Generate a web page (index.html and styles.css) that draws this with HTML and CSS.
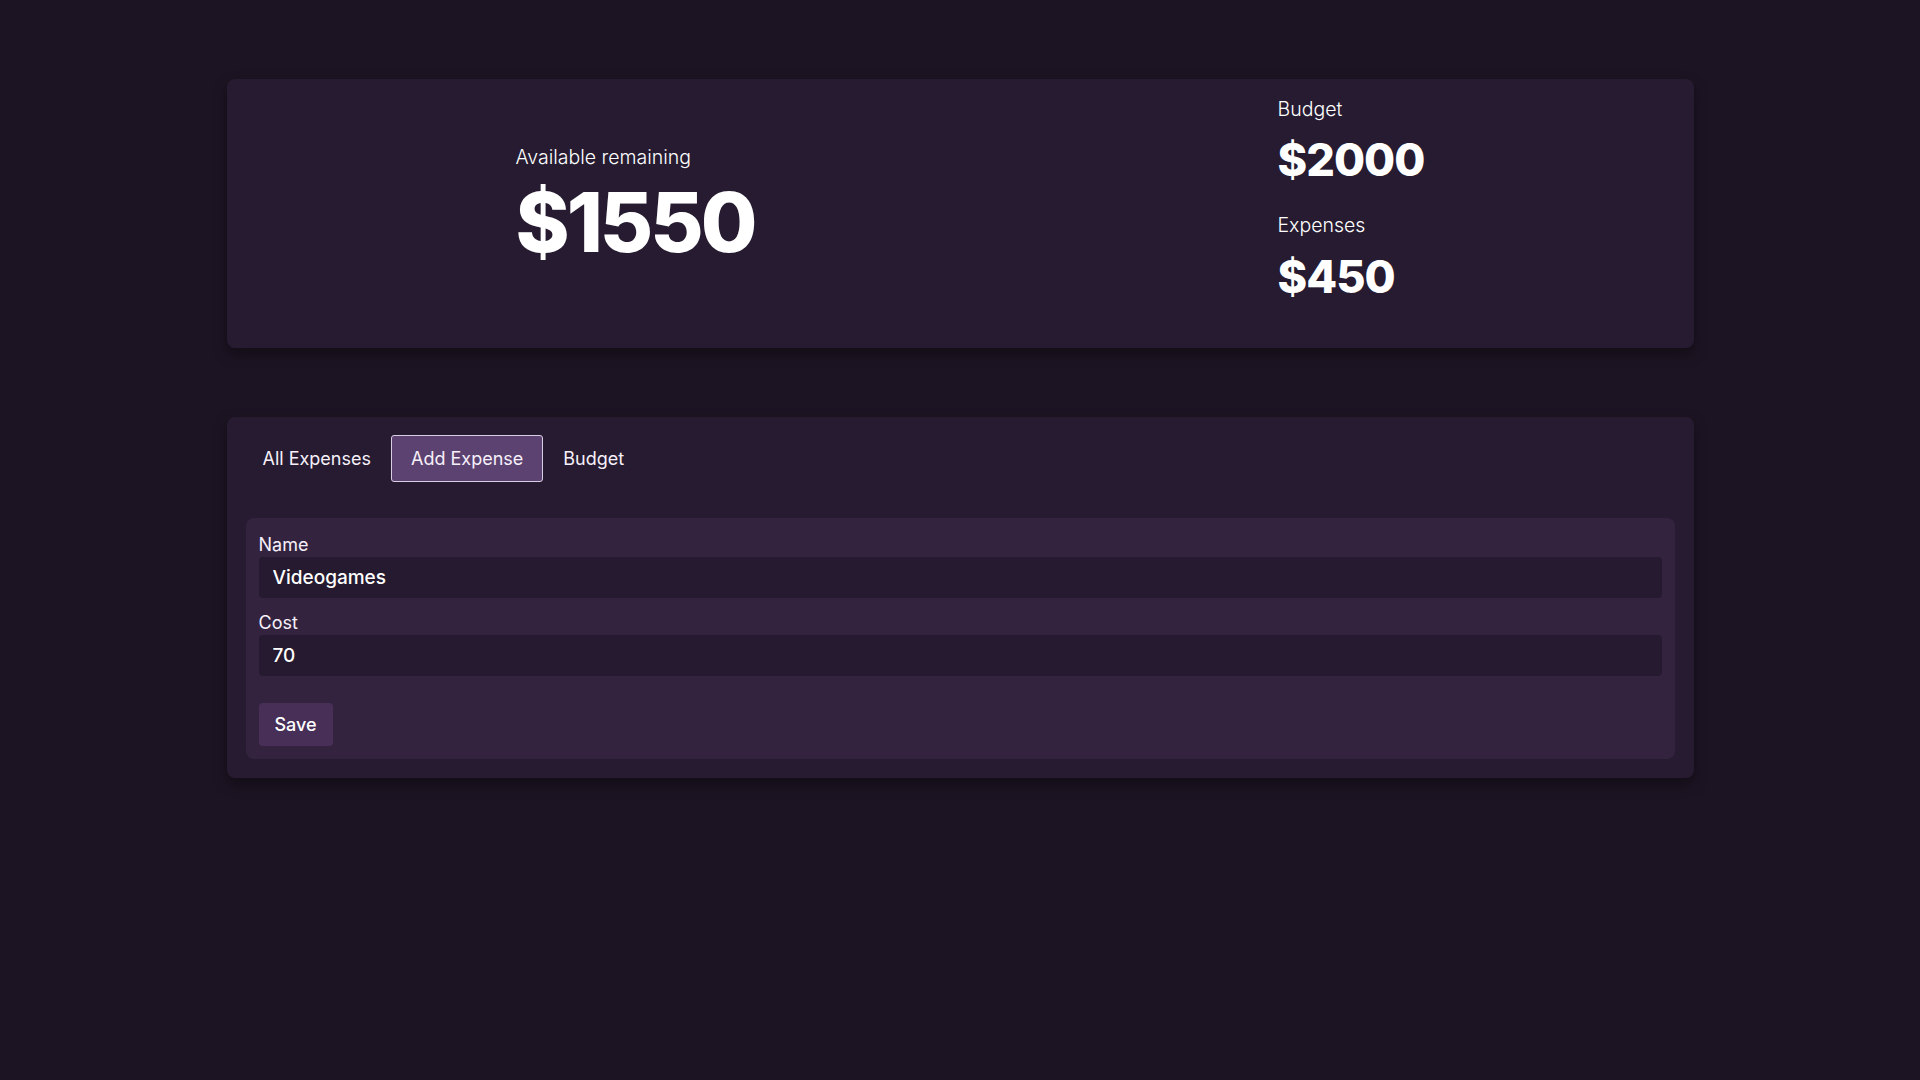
FILE: index.html
```html
<!DOCTYPE html>
<html lang="en">
<head>
<meta charset="utf-8">
<title>Budget</title>
<link rel="stylesheet" href="styles.css">
</head>
<body>
<main class="app">
  <section class="card summary">
    <div class="remaining">
      <p class="label">Available remaining</p>
      <p class="big">$1550</p>
    </div>
    <div class="totals">
      <p class="label">Budget</p>
      <p class="mid">$2000</p>
      <p class="label label-2">Expenses</p>
      <p class="mid">$450</p>
    </div>
  </section>

  <section class="card panel">
    <nav class="tabs">
      <button class="tab">All Expenses</button>
      <button class="tab active">Add Expense</button>
      <button class="tab">Budget</button>
    </nav>
    <form class="form">
      <label class="field-label" for="name">Name</label>
      <input class="input" id="name" type="text" value="Videogames">
      <label class="field-label" for="cost">Cost</label>
      <input class="input" id="cost" type="text" value="70">
      <button class="save" type="button">Save</button>
    </form>
  </section>
</main>
</body>
</html>
```
FILE: styles.css
```css
* { box-sizing: border-box; }
html, body { margin: 0; padding: 0; }
body {
  background: #1c1422;
  color: #ffffff;
  font-family: "Inter", "Open Sans", sans-serif;
  min-height: 1080px;
}
p { margin: 0; }
.app {
  width: 1467px;
  margin: 0 auto;
  padding-top: 79px;
}
.card {
  background: #261b30;
  border-radius: 8px;
  box-shadow: 0 6px 14px rgba(0, 0, 0, 0.35);
}
.summary {
  display: flex;
  height: 269px;
}
.remaining {
  margin-left: 289px;
  padding-top: 66px;
}
.label {
  font-size: 19.5px;
  font-weight: 300;
  line-height: 24px;
  color: #ffffff;
}
.big {
  font-size: 82px;
  font-weight: 800;
  line-height: 96px;
  letter-spacing: -3px;
  margin-top: 6px;
}
.totals {
  margin-left: auto;
  width: 416px;
  padding-top: 18px;
}
.mid {
  font-size: 45px;
  font-weight: 800;
  line-height: 54px;
  letter-spacing: -1px;
  margin-top: 12px;
}
.label-2 { margin-top: 26px; }
.label-2 + .mid { margin-top: 13px; }

.panel {
  margin-top: 69px;
  padding: 18px 19px 19px;
}
.tabs {
  display: flex;
  padding-left: 16px;
}
.tab {
  font-family: inherit;
  font-size: 18px;
  font-weight: 400;
  color: #f6f0fa;
  background: transparent;
  border: 1px solid transparent;
  border-radius: 3px;
  height: 47px;
  padding: 0 19px;
  cursor: pointer;
}
.tabs .tab:first-child { padding-left: 0; }
.tab.active {
  background: #5c4270;
  border-color: #d9cfe3;
}
.form {
  margin-top: 36px;
  background: #33233f;
  border-radius: 8px;
  padding: 14px 13px 13px;
  display: flex;
  flex-direction: column;
  align-items: flex-start;
}
.field-label {
  font-size: 18px;
  font-weight: 400;
  line-height: 25px;
  color: #f6f0fa;
}
.input {
  width: 100%;
  height: 41px;
  background: #251a2f;
  border: none;
  border-radius: 4px;
  color: #ffffff;
  font-family: inherit;
  font-size: 19px;
  font-weight: 500;
  padding: 0 14px;
  margin-bottom: 12px;
  outline: none;
}
.save {
  margin-top: 15px;
  width: 74px;
  height: 43px;
  background: #472f58;
  border: none;
  border-radius: 4px;
  color: #ffffff;
  font-family: inherit;
  font-size: 18px;
  font-weight: 500;
  cursor: pointer;
}
```
